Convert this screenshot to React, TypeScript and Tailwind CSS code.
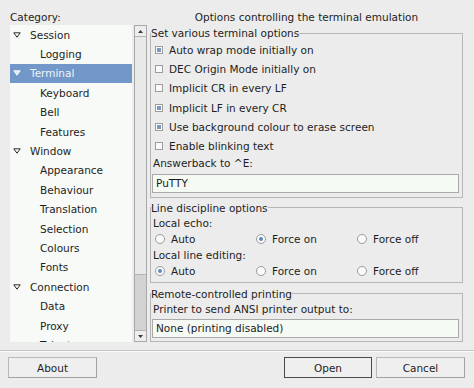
import React from "react";

const categories: { label: string; level: number; selected?: boolean }[] = [
  { label: "Session", level: 0 },
  { label: "Logging", level: 1 },
  { label: "Terminal", level: 0, selected: true },
  { label: "Keyboard", level: 1 },
  { label: "Bell", level: 1 },
  { label: "Features", level: 1 },
  { label: "Window", level: 0 },
  { label: "Appearance", level: 1 },
  { label: "Behaviour", level: 1 },
  { label: "Translation", level: 1 },
  { label: "Selection", level: 1 },
  { label: "Colours", level: 1 },
  { label: "Fonts", level: 1 },
  { label: "Connection", level: 0 },
  { label: "Data", level: 1 },
  { label: "Proxy", level: 1 },
  { label: "Telnet", level: 1 },
];

const terminalOptions = [
  { label: "Auto wrap mode initially on", checked: true },
  { label: "DEC Origin Mode initially on", checked: false },
  { label: "Implicit CR in every LF", checked: false },
  { label: "Implicit LF in every CR", checked: true },
  { label: "Use background colour to erase screen", checked: true },
  { label: "Enable blinking text", checked: false },
];

function Expander({ light }: { light?: boolean }) {
  return (
    <svg width="8" height="6" viewBox="0 0 8 6" className="shrink-0">
      <path
        d="M0.8 0.8 L7.2 0.8 L4 5.2 Z"
        fill={light ? "#dfe8f4" : "#ffffff"}
        stroke={light ? "#f4f7fb" : "#2a2a2a"}
        strokeWidth="1"
        strokeLinejoin="round"
      />
    </svg>
  );
}

function CheckBox({ checked }: { checked: boolean }) {
  return (
    <span className="flex h-[8px] w-[8px] shrink-0 items-center justify-center border border-[#9c9c9c] bg-[#fbfbfb]">
      {checked ? <span className="h-[4px] w-[4px] bg-[#7d97c0]" /> : null}
    </span>
  );
}

function Radio({ checked }: { checked: boolean }) {
  return (
    <span className="flex h-[10px] w-[10px] shrink-0 items-center justify-center rounded-full border border-[#9a9a9a] bg-[#fbfbfb]">
      {checked ? <span className="h-[4px] w-[4px] rounded-full bg-[#5f87bf]" /> : null}
    </span>
  );
}

function RadioRow({ selected }: { selected: number }) {
  const labels = ["Auto", "Force on", "Force off"];
  return (
    <div className="flex h-[16px] items-center pl-[4px]">
      {labels.map((label, i) => (
        <div key={label} className="flex w-[101px] items-center gap-[6px]">
          <Radio checked={selected === i} />
          <span>{label}</span>
        </div>
      ))}
    </div>
  );
}

function TextField({ value }: { value: string }) {
  return (
    <div className="flex h-[19px] items-center border border-[#a9a9a9] bg-[#f6faf5] pl-[3px] text-[#1c1c1c]">
      {value}
    </div>
  );
}

function Button({ children, isDefault }: { children: React.ReactNode; isDefault?: boolean }) {
  return (
    <div
      className={
        isDefault
          ? "flex h-[21px] w-[88px] items-center justify-center border border-[#4a4a4a] bg-[#efefef]"
          : "flex h-[21px] w-[89px] items-center justify-center border border-[#b9b9b9] border-b-[#a2a2a2] border-r-[#a2a2a2] bg-[#efefef]"
      }
    >
      {children}
    </div>
  );
}

export default function App() {
  return (
    <div className="h-[388px] w-[474px] overflow-hidden bg-[#ececec] font-['DejaVu_Sans',sans-serif] text-[10.5px] leading-[14px] text-[#1e1e1e]">
      <div className="flex pl-[10px] pt-[8px]">
        {/* category tree */}
        <div className="flex w-[137px] flex-col">
          <div className="flex h-[17px] items-center">Category:</div>
          <div className="flex h-[317px]">
            <div className="w-[122px] overflow-hidden bg-[#f7faf6]">
              {categories.map((item) => (
                <div
                  key={item.label}
                  className={
                    item.selected
                      ? "flex h-[19.4px] items-center bg-[#7198c8] text-[#eef3fa]"
                      : "flex h-[19.4px] items-center"
                  }
                >
                  {item.level === 0 ? (
                    <div className="flex items-center gap-[9px] pl-[3px]">
                      <Expander light={item.selected} />
                      <span>{item.label}</span>
                    </div>
                  ) : (
                    <span className="pl-[30px]">{item.label}</span>
                  )}
                </div>
              ))}
            </div>
            <div className="ml-[2px] flex w-[13px] flex-col border border-[#a9a9a9] bg-[#d2d2d2]">
              <div className="flex h-[11px] items-center justify-center border-b border-[#b3b3b3] bg-[#eeeeee]">
                <svg width="5" height="3" viewBox="0 0 5 3">
                  <path d="M0 3 L5 3 L2.5 0 Z" fill="#3a3a3a" />
                </svg>
              </div>
              <div className="h-[238px] border-b border-[#b3b3b3] bg-[#e9e9e9]" />
              <div className="flex-1" />
              <div className="flex h-[11px] items-center justify-center border-t border-[#b3b3b3] bg-[#eeeeee]">
                <svg width="5" height="3" viewBox="0 0 5 3">
                  <path d="M0 0 L5 0 L2.5 3 Z" fill="#3a3a3a" />
                </svg>
              </div>
            </div>
          </div>
        </div>

        {/* options panel */}
        <div className="ml-[3px] flex w-[313px] flex-col">
          <div className="flex h-[17px] items-center justify-center">
            Options controlling the terminal emulation
          </div>

          <fieldset className="mt-[1px] border border-[#b6b6b6] pb-[4px]">
            <legend className="ml-0 px-0 leading-[14px]">Set various terminal options</legend>
            {terminalOptions.map((opt) => (
              <div key={opt.label} className="flex h-[19.3px] items-center gap-[6px] pl-[4px]">
                <CheckBox checked={opt.checked} />
                <span>{opt.label}</span>
              </div>
            ))}
            <div className="flex h-[15px] items-center pl-[2px]">Answerback to ^E:</div>
            <div className="mt-[3px] pl-[1px] pr-[3px]">
              <TextField value="PuTTY" />
            </div>
          </fieldset>

          <fieldset className="mt-[3px] border border-[#b6b6b6] pb-[3px]">
            <legend className="px-0 leading-[14px]">Line discipline options</legend>
            <div className="flex h-[16px] items-center pl-[2px]">Local echo:</div>
            <RadioRow selected={1} />
            <div className="flex h-[16px] items-center pl-[2px]">Local line editing:</div>
            <RadioRow selected={0} />
          </fieldset>

          <fieldset className="mt-[4px] border border-[#b6b6b6] pb-[3px]">
            <legend className="px-0 leading-[14px]">Remote-controlled printing</legend>
            <div className="flex h-[16px] items-center pl-[2px]">Printer to send ANSI printer output to:</div>
            <div className="mt-[2px] pl-[1px] pr-[3px]">
              <TextField value="None (printing disabled)" />
            </div>
          </fieldset>
        </div>
      </div>

      <div className="mt-[8px] border-t border-b border-t-[#c3c3c3] border-b-[#fafafa]" />

      <div className="mt-[5px] flex items-center pl-[8px] pr-[9px]">
        <Button>About</Button>
        <div className="ml-auto flex gap-[4px]">
          <Button isDefault>Open</Button>
          <Button>Cancel</Button>
        </div>
      </div>
    </div>
  );
}
